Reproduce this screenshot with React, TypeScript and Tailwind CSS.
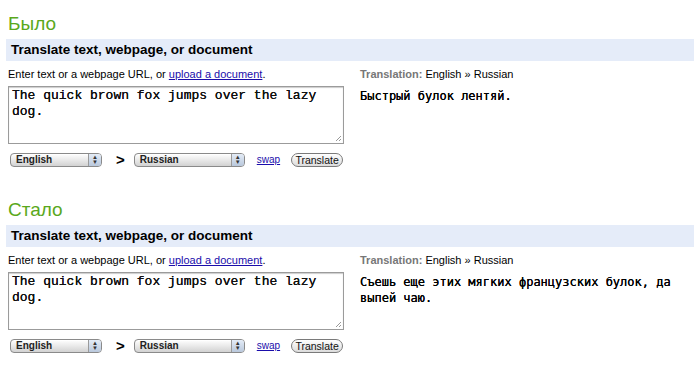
import React from 'react';

const sans = "font-['Liberation_Sans',Arial,sans-serif]";

function Select({ label, width }: { label: string; width: string }) {
  return (
    <div
      className={`${width} h-[14px] flex items-stretch rounded-[4px] border border-[#8a8a8a] bg-gradient-to-b from-[#ffffff] via-[#e9e9e9] to-[#d2d2d2] shadow-[inset_0_1px_0_#fff]`}
    >
      <span className="flex-1 pl-[5px] text-[10px] leading-[12px] font-bold text-[#222]">{label}</span>
      <span className="w-[13px] border-l border-[#9a9a9a] flex flex-col items-center justify-center text-[6px] leading-[5px] text-[#333] bg-gradient-to-b from-[#e4ecf7] to-[#b9c8dc] rounded-r-[3px]">
        <span>▲</span>
        <span>▼</span>
      </span>
    </div>
  );
}

function Section({ title, translation }: { title: string; translation: string }) {
  return (
    <div className="flex flex-col">
      <div className="pl-[2px] h-[20px] text-[19px] leading-[20px] text-[#5aa81c]">{title}</div>
      <div className="mt-[5px] h-[22px] bg-[#e5ecf9] pl-[5px] flex items-center text-[13.5px] font-bold text-black">
        Translate text, webpage, or document
      </div>
      <div className="flex mt-[6px]">
        <div className="w-[336px] ml-[2px] flex flex-col">
          <div className="text-[11px] leading-[14px] text-black">
            Enter text or a webpage URL, or{' '}
            <a href="#" className="text-[#1a0dab] underline">upload a document</a>.
          </div>
          <div className="relative mt-[5px] h-[58px] border border-[#9b9b9b] shadow-[inset_0_1px_1px_#ccc] bg-white px-[3px] pt-[1px] font-['Liberation_Mono','Courier_New',monospace] text-[13px] leading-[16px] text-[#111] [text-shadow:0_0_0.4px_#000]">
            The quick brown fox jumps over the lazy
            <br />
            dog.
            <svg className="absolute right-[1px] bottom-[1px]" width="7" height="7" viewBox="0 0 7 7">
              <path d="M6 1L1 6M6 4L4 6" stroke="#999" strokeWidth="1" />
            </svg>
          </div>
          <div className="flex items-center mt-[8px] pl-[2px]">
            <Select label="English" width="w-[92px]" />
            <span className="ml-[14px] text-[15px] font-bold leading-none">&gt;</span>
            <div className="ml-[9px]">
              <Select label="Russian" width="w-[111px]" />
            </div>
            <a href="#" className="ml-[12px] text-[10px] text-[#1a0dab] underline">swap</a>
            <button className="ml-[11px] h-[14px] w-[52px] rounded-full border border-[#7a7a7a] bg-gradient-to-b from-white to-[#dcdcdc] text-[10.5px] leading-[12px] text-[#111]">
              Translate
            </button>
          </div>
        </div>
        <div className="ml-[16px] flex-1 flex flex-col">
          <div className="text-[11px] leading-[14px] text-black">
            <span className="font-bold text-[#777]">Translation:</span> English » Russian
          </div>
          <div className="mt-[7px] pr-[20px] font-['DejaVu_Sans_Mono',monospace] text-[12px] leading-[16px] text-black [text-shadow:0_0_0.2px_#000]">
            {translation}
          </div>
        </div>
      </div>
    </div>
  );
}

export default function App() {
  return (
    <div className={`w-[700px] h-[391px] bg-white pt-[14px] pl-[6px] pr-[6px] ${sans}`}>
      <Section title="Было" translation="Быстрый булок лентяй." />
      <div className="h-[33px]" />
      <Section title="Стало" translation="Съешь еще этих мягких французских булок, да выпей чаю." />
    </div>
  );
}
